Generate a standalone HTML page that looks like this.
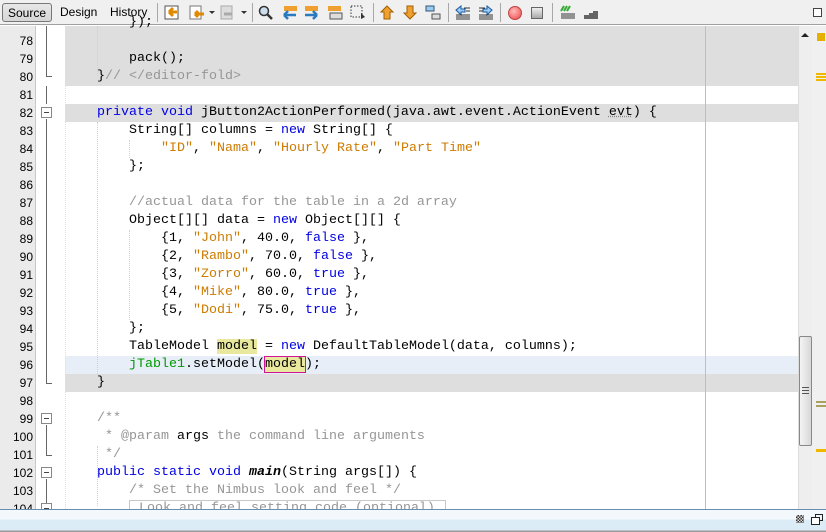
<!DOCTYPE html>
<html><head><meta charset="utf-8"><style>
*{margin:0;padding:0;box-sizing:border-box}
body{width:826px;height:532px;overflow:hidden;background:#fff;position:relative;font-family:"Liberation Sans",sans-serif}
#tb{position:absolute;left:0;top:0;width:826px;height:25px;background:#f0f0f0;border-bottom:1px solid #a0a0a0}
.tab{position:absolute;top:3px;height:19px;font-size:12px;line-height:18px;color:#000}
.ic{position:absolute;top:5px;width:16px;height:15px}
.sep{position:absolute;top:3px;width:1px;height:19px;background:#a8a8a8}
#gut{position:absolute;left:0;top:26px;width:36px;height:483px;background:#ebebeb;border-right:1px solid #c8c8c8}
.ln{position:absolute;left:0;width:33px;text-align:right;font-size:12px;line-height:18px;color:#000}
.row{position:absolute;left:65px;width:733px;height:18px}
.code{position:absolute;left:65px;font-family:"Liberation Mono",monospace;font-size:13.33px;line-height:18px;white-space:pre;color:#000}
.k{color:#0000e6}.s{color:#ce7b00}.c{color:#969696}.g{color:#009900}
.fold{position:absolute;left:41px;width:11px;height:11px;border:1px solid #888;background:#fff}
.fold:after{content:"";position:absolute;left:2px;top:4px;width:5px;height:1px;background:#444}
.vl{position:absolute;left:46px;width:1px;background:#666}
.hl{position:absolute;height:1px;background:#666}
.guide{position:absolute;width:0;border-left:1px dotted #d0d0d0}
</style></head><body>
<div id="tb">
 <div class="tab" style="left:2px;width:50px;border:1px solid #777;border-radius:3px;background:linear-gradient(#e8e8e8,#d6d6d6);text-align:center">Source</div>
 <div class="tab" style="left:60px">Design</div>
 <div class="tab" style="left:110px">History</div>
 <div class="sep" style="left:157px"></div>
 <svg class="ic" style="left:164px" viewBox="0 0 16 15"><rect x="1" y="1" width="13" height="13" fill="#fff" stroke="#555"/><path d="M5 7h8M5 7l4-4M5 7l4 4" stroke="#e08a00" stroke-width="3" fill="none"/></svg>
 <svg class="ic" style="left:189px" viewBox="0 0 16 15"><rect x="1" y="1" width="11" height="13" fill="#fff" stroke="#777"/><path d="M6 9h9M6 9l3-3M6 9l3 3" stroke="#e08a00" stroke-width="3" fill="none"/></svg>
 <div style="position:absolute;left:209px;top:11px;border:3px solid transparent;border-top:3px solid #333"></div>
 <svg class="ic" style="left:220px" viewBox="0 0 16 15"><rect x="1" y="1" width="11" height="13" fill="#ddd" stroke="#aaa"/><path d="M4 9h8" stroke="#aaa" stroke-width="3"/></svg>
 <div style="position:absolute;left:241px;top:11px;border:3px solid transparent;border-top:3px solid #333"></div>
 <div class="sep" style="left:252px"></div>
 <svg class="ic" style="left:258px" viewBox="0 0 16 15"><circle cx="6" cy="6" r="4.5" fill="#cde" stroke="#333" stroke-width="1.5"/><path d="M9 9l5 5" stroke="#333" stroke-width="2.5"/></svg>
 <svg class="ic" style="left:282px" viewBox="0 0 16 15"><rect x="2" y="1" width="13" height="5" fill="#f0a030"/><path d="M2 10h12M2 10l4-4M2 10l4 4" stroke="#2a7ac0" stroke-width="2.5" fill="none"/></svg>
 <svg class="ic" style="left:304px" viewBox="0 0 16 15"><rect x="1" y="1" width="13" height="5" fill="#f0a030"/><path d="M1 10h12M13 10l-4-4M13 10l-4 4" stroke="#2a7ac0" stroke-width="2.5" fill="none"/></svg>
 <svg class="ic" style="left:327px" viewBox="0 0 16 15"><rect x="1" y="1" width="13" height="5" fill="#f0a030"/><rect x="3" y="8" width="12" height="6" fill="#ddd" stroke="#555"/></svg>
 <svg class="ic" style="left:350px" viewBox="0 0 16 15"><rect x="1" y="1" width="11" height="11" fill="none" stroke="#333" stroke-dasharray="1.5 1.5"/><path d="M11 8l4 4-4 2z" fill="#333"/></svg>
 <div class="sep" style="left:373px"></div>
 <svg class="ic" style="left:379px" viewBox="0 0 16 15"><path d="M8 1l6 6h-3v7h-6v-7h-3z" fill="#f0a030" stroke="#a06000"/></svg>
 <svg class="ic" style="left:402px" viewBox="0 0 16 15"><path d="M8 14l6-6h-3v-7h-6v7h-3z" fill="#f0a030" stroke="#a06000"/></svg>
 <svg class="ic" style="left:425px" viewBox="0 0 16 15"><rect x="1" y="1" width="8" height="5" fill="#9ce" stroke="#357"/><rect x="7" y="9" width="8" height="5" fill="#ddd" stroke="#555"/></svg>
 <div class="sep" style="left:448px"></div>
 <svg class="ic" style="left:455px" viewBox="0 0 16 15"><path d="M1 5l5-4v3h4v3h-4v3z" fill="#9cf" stroke="#1a5a9a"/><path d="M9 3h6M11 6h4M1 10h14M1 12h14M1 14h14" stroke="#333"/></svg>
 <svg class="ic" style="left:478px" viewBox="0 0 16 15"><path d="M14 5l-5-4v3h-4v3h4v3z" fill="#9cf" stroke="#1a5a9a"/><path d="M1 3h6M1 6h4M1 10h14M1 12h14M1 14h14" stroke="#333"/></svg>
 <div class="sep" style="left:500px"></div>
 <div style="position:absolute;left:508px;top:6px;width:14px;height:14px;border-radius:50%;background:radial-gradient(circle at 40% 35%,#fbb,#e44);border:1px solid #b44"></div>
 <div style="position:absolute;left:531px;top:7px;width:12px;height:12px;background:linear-gradient(#eee,#aaa);border:1px solid #666"></div>
 <div class="sep" style="left:552px"></div>
 <svg class="ic" style="left:560px" viewBox="0 0 16 15"><path d="M1 6l3-5M4 6l3-5M7 6l3-5" stroke="#3a3" stroke-width="2"/><path d="M1 9h14M1 11h14M1 13h14" stroke="#333"/></svg>
 <svg class="ic" style="left:583px" viewBox="0 0 16 15"><path d="M10 7h5M6 9h9M1 11h14M1 13h14" stroke="#111" stroke-width="1.3"/></svg>
 <div style="position:absolute;left:813px;top:8px;width:9px;height:9px;border:1px solid #444;background:#fff"></div>
</div>

<div id="gut"></div>
<!-- highlighted rows -->
<div class="row" style="top:26px;height:60px;background:#dedede"></div>
<div class="row" style="top:104px;background:#dedede"></div>
<div class="row" style="top:356px;background:#e7eef8"></div>
<div class="row" style="top:374px;background:#dedede"></div>
<div style="position:absolute;left:705px;top:26px;width:1px;height:483px;background:#f0a8a8"></div>
<!-- guides -->
<div class="guide" style="left:97px;top:26px;height:50px"></div>
<div class="guide" style="left:97px;top:122px;height:252px"></div>
<div class="guide" style="left:129px;top:140px;height:18px"></div>
<div class="guide" style="left:129px;top:230px;height:90px"></div>
<div class="guide" style="left:65px;top:26px;height:483px;border-color:#e0e0e0"></div>
<div class="guide" style="left:97px;top:446px;height:60px"></div>
<!-- fold markers -->
<div class="vl" style="top:26px;height:50px"></div><div class="hl" style="left:46px;top:76px;width:6px"></div>
<div class="vl" style="top:86px;height:18px"></div>
<div class="fold" style="top:107px"></div>
<div class="vl" style="top:119px;height:264px"></div><div class="hl" style="left:46px;top:383px;width:6px"></div>
<div class="fold" style="top:413px"></div>
<div class="vl" style="top:425px;height:30px"></div><div class="hl" style="left:46px;top:455px;width:6px"></div>
<div class="fold" style="top:467px"></div>
<div class="vl" style="top:479px;height:24px"></div>
<div class="fold" style="top:503px"></div>

<div class="ln" style="top:32px">78</div><div class="ln" style="top:50px">79</div><div class="ln" style="top:68px">80</div><div class="ln" style="top:86px">81</div><div class="ln" style="top:104px">82</div><div class="ln" style="top:122px">83</div><div class="ln" style="top:140px">84</div><div class="ln" style="top:158px">85</div><div class="ln" style="top:176px">86</div><div class="ln" style="top:194px">87</div><div class="ln" style="top:212px">88</div><div class="ln" style="top:230px">89</div><div class="ln" style="top:248px">90</div><div class="ln" style="top:266px">91</div><div class="ln" style="top:284px">92</div><div class="ln" style="top:302px">93</div><div class="ln" style="top:320px">94</div><div class="ln" style="top:338px">95</div><div class="ln" style="top:356px">96</div><div class="ln" style="top:374px">97</div><div class="ln" style="top:392px">98</div><div class="ln" style="top:410px">99</div><div class="ln" style="top:428px">100</div><div class="ln" style="top:446px">101</div><div class="ln" style="top:464px">102</div><div class="ln" style="top:482px">103</div><div class="ln" style="top:500px">104</div>

<div class="code" style="top:14px">        });</div>
<div class="code" style="top:50px">        pack();</div>
<div class="code" style="top:68px">    }<span class="c">// &lt;/editor-fold&gt;</span></div>
<div class="code" style="top:104px">    <span class="k">private void</span> jButton2ActionPerformed(java.awt.event.ActionEvent <span style="text-decoration:underline dotted #888">evt</span>) {</div>
<div class="code" style="top:122px">        String[] columns = <span class="k">new</span> String[] {</div>
<div class="code" style="top:140px">            <span class="s">"ID"</span>, <span class="s">"Nama"</span>, <span class="s">"Hourly Rate"</span>, <span class="s">"Part Time"</span></div>
<div class="code" style="top:158px">        };</div>
<div class="code" style="top:194px">        <span class="c">//actual data for the table in a 2d array</span></div>
<div class="code" style="top:212px">        Object[][] data = <span class="k">new</span> Object[][] {</div>
<div class="code" style="top:230px">            {1, <span class="s">"John"</span>, 40.0, <span class="k">false</span> },</div>
<div class="code" style="top:248px">            {2, <span class="s">"Rambo"</span>, 70.0, <span class="k">false</span> },</div>
<div class="code" style="top:266px">            {3, <span class="s">"Zorro"</span>, 60.0, <span class="k">true</span> },</div>
<div class="code" style="top:284px">            {4, <span class="s">"Mike"</span>, 80.0, <span class="k">true</span> },</div>
<div class="code" style="top:302px">            {5, <span class="s">"Dodi"</span>, 75.0, <span class="k">true</span> },</div>
<div class="code" style="top:320px">        };</div>
<div class="code" style="top:338px">        TableModel <span style="background:#e8e89e">model</span> = <span class="k">new</span> DefaultTableModel(data, columns);</div>
<div class="code" style="top:356px">        <span class="g">jTable1</span>.setModel(<span style="outline:1px solid #d0149a;background:#e8e89e">model</span>);</div>
<div class="code" style="top:374px">    }</div>
<div class="code" style="top:410px">    <span class="c">/**</span></div>
<div class="code" style="top:428px">    <span class="c"> * @param </span>args<span class="c"> the command line arguments</span></div>
<div class="code" style="top:446px">    <span class="c"> */</span></div>
<div class="code" style="top:464px">    <span class="k">public static void</span> <b><i>main</i></b>(String args[]) {</div>
<div class="code" style="top:482px">        <span class="c">/* Set the Nimbus look and feel */</span></div>
<div style="position:absolute;left:129px;top:500px;width:317px;height:12px;border:1px solid #c8c8c8"></div>
<div class="code c" style="top:500px;left:139px">Look and feel setting code (optional)</div>

<!-- scrollbar -->
<div style="position:absolute;left:798px;top:26px;width:14px;height:483px;background:#eeeeee;border-left:1px solid #ddd"></div>
<div style="position:absolute;left:801px;top:33px;border:4px solid transparent;border-bottom:4px solid #222;border-top:0"></div>
<div style="position:absolute;left:799px;top:336px;width:13px;height:110px;border:1px solid #888;border-radius:2px;background:linear-gradient(90deg,#f4f4f4,#d8d8d8)"></div>
<div style="position:absolute;left:802px;top:387px;width:7px;height:7px;border-top:1px solid #555;border-bottom:1px solid #555"><div style="margin-top:2px;height:1px;background:#555"></div></div>
<div style="position:absolute;left:812px;top:26px;width:14px;height:483px;background:#f0f0f0"></div>
<div style="position:absolute;left:817px;top:33px;width:8px;height:8px;background:#e6b000"></div>
<div style="position:absolute;left:816px;top:73px;width:10px;height:2px;background:#f0b800;box-shadow:0 3px #f0b800,0 6px #f0b800"></div>
<div style="position:absolute;left:816px;top:401px;width:10px;height:2px;background:#aaa060"></div>
<div style="position:absolute;left:816px;top:405px;width:10px;height:2px;background:#aaa060"></div>
<div style="position:absolute;left:816px;top:449px;width:10px;height:3px;background:#f0b800"></div>

<!-- status bar -->
<div style="position:absolute;left:0;top:509px;width:826px;height:23px;border-top:1px solid #6a8cb0;background:linear-gradient(#f2f8fc 0,#f2f8fc 9px,#dcecf7 10px,#dcecf7 20px,#999 21px)"></div>
<div style="position:absolute;left:796px;top:515px;width:8px;height:8px;background:repeating-conic-gradient(#333 0 25%,#ddd 0 50%) 0 0/3px 3px"></div>
<div style="position:absolute;left:815px;top:514px;width:8px;height:7px;border:1px solid #222"></div>
<div style="position:absolute;left:811px;top:517px;width:9px;height:8px;border:1px solid #222;background:#fff"></div>
</body></html>
